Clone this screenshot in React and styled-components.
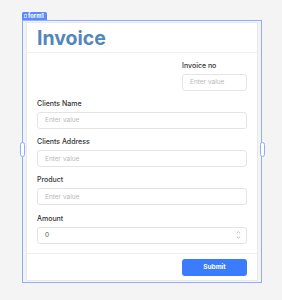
import styled, { createGlobalStyle } from "styled-components";

const Global = createGlobalStyle`
  html, body { margin: 0; padding: 0; background: #f4f4f4; }
  body { font-family: Inter, "Noto Sans", "Liberation Sans", sans-serif; }
  * { box-sizing: border-box; }
`

const Page = styled.div`
  width: 282px;
  height: 300px;
  padding: 20px 0 0 22px;
`

// selection frame around the widget
const Frame = styled.div`
  position: relative;
  width: 240px;
  height: 263px;
  border: 1.5px solid #8eaefc;
  padding: 1px 3px 1px 3px;
`

const Tag = styled.div`
  position: absolute;
  left: -1.5px;
  top: -9px;
  height: 8px;
  padding: 0 3px 0 2px;
  display: flex;
  align-items: center;
  gap: 1.5px;
  background: #5b8cfb;
  border-radius: 1.5px 1.5px 0 0;
  color: #fff;
  font-size: 5.8px;
  font-weight: 700;
  line-height: 8px;
`

const Handle = styled.div`
  position: absolute;
  top: 121px;
  ${props => props.side}: -3.5px;
  width: 5px;
  height: 15px;
  border: 1.2px solid #8eaefc;
  background: #fff;
  border-radius: 3px;
`

const Card = styled.div`
  height: 100%;
  background: #fff;
  border: 1px solid #e8e8e8;
  display: flex;
  flex-direction: column;
`

const Header = styled.div`
  height: 30px;
  padding: 0 10px;
  display: flex;
  align-items: center;
  border-bottom: 1.5px solid #efefef;
`

const Title = styled.h1`
  margin: 0;
  font-size: 19.5px;
  font-weight: 700;
  color: #5386b9;
`

const Body = styled.div`
  flex: 1;
  padding: 7.5px 10px 0 10px;
  display: flex;
  flex-direction: column;
  gap: 8.25px;
  border-bottom: 1.5px solid #efefef;
`

const Field = styled.div`
  display: flex;
  flex-direction: column;
  gap: 3px;
  ${props => props.small && `
    align-self: flex-end;
    width: 65px;
  `}
`

const Label = styled.label`
  font-size: 7px;
  font-weight: 500;
  line-height: 10px;
  color: #333;
`

const InputBox = styled.div`
  position: relative;
  height: 17px;
  border: 1px solid #e4e4e4;
  border-radius: 3px;
  display: flex;
  align-items: center;
`

const Input = styled.input`
  width: 100%;
  height: 100%;
  border: none;
  outline: none;
  background: transparent;
  padding: 0 7px;
  font-family: inherit;
  font-size: 6.5px;
  color: #555;
  &::placeholder { color: #b8b8b8; }
`

const Spinner = styled.div`
  position: absolute;
  right: 5px;
  top: 3.5px;
  display: flex;
  flex-direction: column;
  gap: 2px;
`

const Footer = styled.div`
  height: 26px;
  padding: 0 10px;
  display: flex;
  align-items: center;
  justify-content: flex-end;
`

const Submit = styled.button`
  width: 65px;
  height: 17px;
  border: none;
  border-radius: 3px;
  background: #3b7bfd;
  color: #fff;
  font-family: inherit;
  font-size: 6.5px;
  font-weight: 700;
  cursor: pointer;
`

const Chevron = ({ up }) => (
  <svg width="5" height="3" viewBox="0 0 5 3">
    <path d={up ? "M0.8 2.4 L2.5 0.8 L4.2 2.4" : "M0.8 0.6 L2.5 2.2 L4.2 0.6"} fill="none" stroke="#a0a0a0" strokeWidth="0.7" />
  </svg>
)

const TextField = ({ label, small }) => (
  <Field small={small}>
    <Label>{label}</Label>
    <InputBox>
      <Input placeholder="Enter value" />
    </InputBox>
  </Field>
)

export default function App() {
  return (
    <Page>
      <Global />
      <Frame>
        <Tag>
          <svg width="3" height="4" viewBox="0 0 3 4">
            <rect x="0.3" y="0.3" width="2.4" height="3.4" fill="none" stroke="#dfe8ff" strokeWidth="0.6" />
          </svg>
          form1
        </Tag>
        <Handle side="left" />
        <Handle side="right" />
        <Card>
          <Header>
            <Title>Invoice</Title>
          </Header>
          <Body>
            <TextField label="Invoice no" small />
            <TextField label="Clients Name" />
            <TextField label="Clients Address" />
            <TextField label="Product" />
            <Field>
              <Label>Amount</Label>
              <InputBox>
                <Input defaultValue="0" />
                <Spinner>
                  <Chevron up />
                  <Chevron />
                </Spinner>
              </InputBox>
            </Field>
          </Body>
          <Footer>
            <Submit>Submit</Submit>
          </Footer>
        </Card>
      </Frame>
    </Page>
  )
}
